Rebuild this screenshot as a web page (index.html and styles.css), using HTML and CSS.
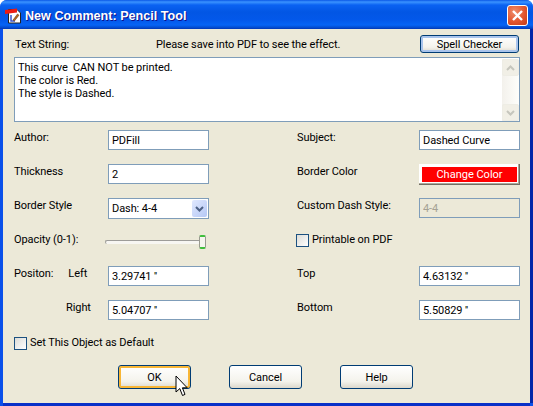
FILE: index.html
```html
<!DOCTYPE html>
<html lang="en">
<head>
<meta charset="utf-8">
<title>New Comment: Pencil Tool</title>
<link rel="stylesheet" href="styles.css">
</head>
<body>
<div class="window">
  <header class="titlebar">
    <svg class="app-icon" width="17" height="17" viewBox="0 0 17 17">
      <path d="M3.5 2.5H12L15.5 6V16H3.5Z" fill="#fff" stroke="#222" stroke-width="1"/>
      <path d="M0 3L12 1.5V5.5L0 7Z" fill="#ea1c14"/>
      <path d="M6 8V14H10" fill="none" stroke="#3a55c8" stroke-width="1.5"/>
      <path d="M8 13L12.5 7L14 8.2L9.4 14Z" fill="#b5681e" stroke="#5a2c08" stroke-width=".5"/>
    </svg>
    <h1 class="title">New Comment: Pencil Tool</h1>
    <button class="close" aria-label="Close">
      <svg width="13" height="13" viewBox="0 0 13 13"><path d="M2 2L11 11M11 2L2 11" stroke="#fff" stroke-width="2.4"/></svg>
    </button>
  </header>
  <main class="body">
    <div class="top-row">
      <span class="top-label">Text String:</span>
      <span class="top-note">Please save into PDF to see the effect.</span>
      <button class="btn spell">Spell Checker</button>
    </div>
    <div class="memo">
      <div class="memo-text">This curve&nbsp; CAN NOT be printed.<br>The color is Red.<br>The style is Dashed.</div>
      <div class="scrollbar">
        <span class="scroll-btn"><svg width="9" height="6" viewBox="0 0 9 6"><path d="M1 5L4.5 1.5L8 5" fill="none" stroke="#c6c6bd" stroke-width="2"/></svg></span>
        <span class="scroll-btn"><svg width="9" height="6" viewBox="0 0 9 6"><path d="M1 1L4.5 4.5L8 1" fill="none" stroke="#c6c6bd" stroke-width="2"/></svg></span>
      </div>
    </div>
    <div class="form">
      <label class="lbl">Author:</label>
      <input class="field" value="PDFill">
      <label class="lbl">Subject:</label>
      <input class="field" value="Dashed Curve">

      <label class="lbl">Thickness</label>
      <input class="field" value="2">
      <label class="lbl">Border Color</label>
      <button class="color-btn"><span class="color-face">Change Color</span></button>

      <label class="lbl">Border Style</label>
      <div class="select">
        <span class="select-value">Dash: 4-4</span>
        <span class="select-arrow"><svg width="9" height="6" viewBox="0 0 9 6"><path d="M1 1L4.5 4.5L8 1" fill="none" stroke="#4d6185" stroke-width="2"/></svg></span>
      </div>
      <label class="lbl">Custom Dash Style:</label>
      <input class="field off" value="4-4" disabled>

      <label class="lbl">Opacity (0-1):</label>
      <div class="slider"><span class="track"></span><span class="thumb"></span></div>
      <label class="check"><span class="box"></span>Printable on PDF</label>

      <label class="lbl pos">Positon:<span>Left</span></label>
      <input class="field" value="3.29741 ''">
      <label class="lbl">Top</label>
      <input class="field" value="4.63132 ''">

      <label class="lbl pos2">Right</label>
      <input class="field" value="5.04707 ''">
      <label class="lbl">Bottom</label>
      <input class="field" value="5.50829 ''">
    </div>
    <label class="check default"><span class="box"></span>Set This Object as Default</label>
    <div class="actions">
      <button class="btn action ok">OK</button>
      <button class="btn action">Cancel</button>
      <button class="btn action">Help</button>
    </div>
  </main>
  <svg class="cursor" width="13" height="24" viewBox="0 0 13 24">
    <path d="M1 1V17L4.8 13.6L7.5 20.5L10 19.4L7.4 12.8H12.2Z" fill="#fff" stroke="#000" stroke-width="1"/>
  </svg>
</div>
</body>
</html>
```
FILE: styles.css
```css
* { box-sizing: border-box; }
html, body { margin: 0; padding: 0; }
body {
  width: 533px;
  height: 406px;
  overflow: hidden;
  background: #fff;
  font: 11px Roboto, "Liberation Sans", sans-serif;
  letter-spacing: -.08px;
  color: #000;
}
.window {
  position: relative;
  width: 533px;
  height: 406px;
  display: flex;
  flex-direction: column;
  border-radius: 7px 7px 0 0;
  overflow: hidden;
  background: #0a50ea;
}
.titlebar {
  height: 29px;
  flex: none;
  display: flex;
  align-items: center;
  padding: 2px 5px 0;
  background: linear-gradient(#0a58e6 0, #3a93ff 2px, #0a62f2 5px, #0256e4 12px, #0358ea 20px, #0664f5 25px, #0347c8 28px, #0234b4 29px);
}
.app-icon { flex: none; margin-right: 3px; }
.title {
  margin: 0;
  flex: 1;
  font: bold 12.6px "Liberation Sans", Arial, sans-serif;
  letter-spacing: 0;
  color: #fff;
  text-shadow: 1px 1px 0 #0f1089;
}
.close {
  width: 21px;
  height: 21px;
  padding: 0;
  display: flex;
  align-items: center;
  justify-content: center;
  border: 1px solid #fff;
  border-radius: 3px;
  background: radial-gradient(circle at 35% 30%, #ef8e6c, #e2562f 55%, #c33b17);
}
.body {
  flex: 1;
  margin: 0 3px 3px 3px;
  padding: 6px 10px 0 11px;
  background: #ece9d8;
  box-shadow: 3px 0 0 #0226a8, 0 3px 0 #0830c8;
}
.top-row {
  display: flex;
  align-items: center;
  height: 18px;
}
.top-label { width: 142px; padding-left: 1px; }
.top-note { flex: 1; }
.btn {
  font: 11px Roboto, "Liberation Sans", sans-serif;
  letter-spacing: -.08px;
  color: #000;
  padding: 0;
  border: 1px solid #003c74;
  border-radius: 3px;
  background: linear-gradient(#fff, #f4f3ec 70%, #dcd8cc);
}
.spell {
  width: 99px;
  height: 18px;
  margin-right: 1px;
  box-shadow: inset 0 0 0 2px #a9c4ec;
}
.memo {
  display: flex;
  height: 65px;
  margin-top: 4px;
  background: #fff;
  border: 1px solid #7f9db9;
}
.memo-text {
  flex: 1;
  padding: 3px;
  line-height: 13px;
}
.scrollbar {
  width: 17px;
  margin: 1px 0 0;
  display: flex;
  flex-direction: column;
  justify-content: space-between;
  background: linear-gradient(90deg, #f3f1ec, #fefefb);
}
.scroll-btn {
  height: 17px;
  display: flex;
  align-items: center;
  justify-content: center;
  border: 1px solid #eeede5;
  border-radius: 2px;
  background: #f1efe6;
}
.form {
  display: grid;
  grid-template-columns: 94px 189px 122px 101px;
  grid-template-rows: repeat(6, 34px);
  margin-top: 8px;
}
.form > * { align-self: start; }
.lbl { line-height: 14px; padding-top: 1px; }
.field {
  width: 101px;
  height: 20px;
  padding: 0 3px;
  margin: 0;
  font: 11px Roboto, "Liberation Sans", sans-serif;
  letter-spacing: -.08px;
  color: #000;
  background: #fff;
  border: 1px solid #7f9db9;
  border-radius: 0;
  outline: 0;
}
.off { background: #ece9d8; color: #a5a294; }
.color-btn {
  width: 101px;
  height: 21px;
  padding: 3px;
  border: 0;
  background: #fff;
  box-shadow: inset -1px -1px 0 #716f64, inset -2px -2px 0 #aca899;
}
.color-face {
  display: block;
  height: 15px;
  background: #ff0000;
  color: #fff;
  font: 11px/15px Roboto, "Liberation Sans", sans-serif;
}
.select {
  width: 101px;
  height: 21px;
  display: flex;
  align-items: center;
  background: #fff;
  border: 1px solid #7f9db9;
}
.select-value { flex: 1; padding-left: 3px; }
.select-arrow {
  width: 15px;
  height: 17px;
  margin-right: 1px;
  display: flex;
  align-items: center;
  justify-content: center;
  border-radius: 2px;
  background: linear-gradient(135deg, #e0e8fe, #b5c8f5);
}
.slider {
  position: relative;
  width: 101px;
  height: 14px;
  margin: 3px 0 0 -3px;
  display: flex;
  align-items: center;
}
.track {
  flex: 1;
  height: 4px;
  border: 1px solid #9d9c99;
  border-width: 1px 0 0 1px;
  background: #f7f6f2;
  border-radius: 2px;
}
.thumb {
  position: absolute;
  right: 0;
  top: 0;
  width: 7px;
  height: 14px;
  border: 1px solid #9a9a90;
  border-top: 2px solid #3fbe3c;
  border-bottom: 2px solid #3fbe3c;
  border-radius: 2px;
  background: #f5f4ee;
}
.check {
  display: flex;
  align-items: center;
  height: 14px;
  line-height: 14px;
  white-space: nowrap;
}
.form .check { grid-column: 3 / 5; margin: 1px 0 0 -1px; }
.box {
  width: 13px;
  height: 13px;
  margin-right: 3px;
  flex: none;
  border: 1px solid #1c5180;
  background: linear-gradient(135deg, #dcdcd7, #fff);
}
.default { margin-top: 2px; }
.pos { display: flex; }
.pos span { margin-left: 15px; }
.pos2 { padding-left: 52px; }
.actions {
  display: flex;
  gap: 38px;
  margin: 15px 0 0 104px;
}
.action {
  width: 73px;
  height: 24px;
}
.ok { box-shadow: inset 0 0 0 2px #f8b636; }
.cursor { position: absolute; left: 175px; top: 375px; }
```
